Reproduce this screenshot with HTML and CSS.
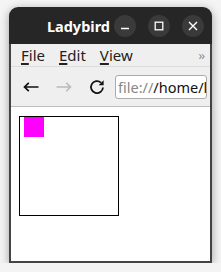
FILE: index.html
```html
<!DOCTYPE html>
<html>

<head>
    <meta charset="utf-8">
    <title>Ladybird</title>
    <link rel="stylesheet" href="styles.css">
</head>

<body>

    <div class="window">

        <div class="titlebar">
            <span class="title">Ladybird</span>
            <div class="controls">
                <span class="ctl">
                    <svg width="10" height="10" viewBox="0 0 10 10"><path d="M1 7.5h8" stroke="#fff" stroke-width="1.4"/></svg>
                </span>
                <span class="ctl">
                    <svg width="10" height="10" viewBox="0 0 10 10"><rect x="1.2" y="1.2" width="7.6" height="7.6" fill="none" stroke="#fff" stroke-width="1.3"/></svg>
                </span>
                <span class="ctl">
                    <svg width="10" height="10" viewBox="0 0 10 10"><path d="M1 1l8 8M9 1l-8 8" stroke="#fff" stroke-width="1.4"/></svg>
                </span>
            </div>
        </div>

        <div class="frame">

            <div class="menubar">
                <span class="menu"><u>F</u>ile</span>
                <span class="menu"><u>E</u>dit</span>
                <span class="menu"><u>V</u>iew</span>
                <span class="more">&rsaquo;&rsaquo;</span>
            </div>

            <div class="toolbar">
                <span class="tool">
                    <svg width="16" height="10" viewBox="0 0 16 10"><path d="M1.5 5h14M5.8 0.8L1.5 5l4.3 4.2" fill="none" stroke="#111" stroke-width="1.7"/></svg>
                </span>
                <span class="tool">
                    <svg width="16" height="10" viewBox="0 0 16 10"><path d="M0.5 5h14M10.2 0.8L14.5 5l-4.3 4.2" fill="none" stroke="#bbb" stroke-width="1.6"/></svg>
                </span>
                <span class="tool">
                    <svg width="16" height="16" viewBox="0 0 16 16"><path d="M14 8.5A6 6 0 1 1 12 3.6" fill="none" stroke="#111" stroke-width="1.8"/><path d="M14.6 1.2v5H9.6z" fill="#111"/></svg>
                </span>
                <div class="url"><span class="scheme">file://</span>/home/l</div>
            </div>

            <div class="page">
                <div class="box">
                    <div class="pink"></div>
                </div>
            </div>

        </div>

    </div>

</body>

</html>
```

FILE: styles.css
```css
body {
    margin: 0;
    padding: 7px 9px 0 9px;
    background-color: #f4f4f4;
    font-family: "Noto Sans", "DejaVu Sans", sans-serif;
}

.window {
    width: 203px;
    height: 256px;
    border-radius: 9px 9px 0 0;
    box-shadow: 0 2px 10px rgba(0, 0, 0, 0.35);
    display: flex;
    flex-direction: column;
    overflow: hidden;
}

.titlebar {
    height: 37px;
    background-color: #262626;
    display: flex;
    align-items: center;
    justify-content: flex-end;
    padding-right: 8px;
}

.title {
    color: #fff;
    font-weight: bold;
    font-size: 14.5px;
    margin-right: 4px;
}

.controls {
    display: flex;
    gap: 12px;
}

.ctl {
    width: 22px;
    height: 22px;
    border-radius: 50%;
    background-color: #3a3a3a;
    display: flex;
    align-items: center;
    justify-content: center;
}

.frame {
    flex: 1;
    display: flex;
    flex-direction: column;
    border: 2px solid #444;
    border-top: none;
}

.menubar {
    height: 22px;
    background-color: #efefef;
    border-bottom: 1px solid #dcdcdc;
    display: flex;
    align-items: center;
    padding-left: 3px;
    font-size: 15px;
    color: #222;
}

.menu {
    padding: 0 7px;
}

.menu u {
    text-decoration-thickness: 2px;
    text-underline-offset: 2px;
}

.more {
    margin-left: auto;
    margin-right: 6px;
    font-size: 12px;
    color: #888;
    letter-spacing: -1px;
}

.toolbar {
    height: 39px;
    background-color: #efefef;
    border-bottom: 1px solid #bdbdbd;
    display: flex;
    align-items: center;
    padding-left: 3px;
}

.tool {
    width: 33px;
    height: 24px;
    display: flex;
    align-items: center;
    justify-content: center;
}

.url {
    flex: 1;
    height: 24px;
    margin: 0 3px 0 2px;
    background-color: #fff;
    border: 1px solid #ababab;
    border-radius: 3px;
    box-sizing: border-box;
    padding-left: 2px;
    font-size: 14.5px;
    line-height: 22px;
    color: #111;
    white-space: nowrap;
    overflow: hidden;
}

.scheme {
    color: #888;
}

.page {
    flex: 1;
    background-color: #fff;
    padding: 9px 0 0 8px;
}

.box {
    width: 100px;
    height: 100px;
    box-sizing: border-box;
    border: 1px solid #000;
}

.pink {
    width: 20px;
    height: 20px;
    margin-left: 4px;
    background-color: #f0f;
}
```
